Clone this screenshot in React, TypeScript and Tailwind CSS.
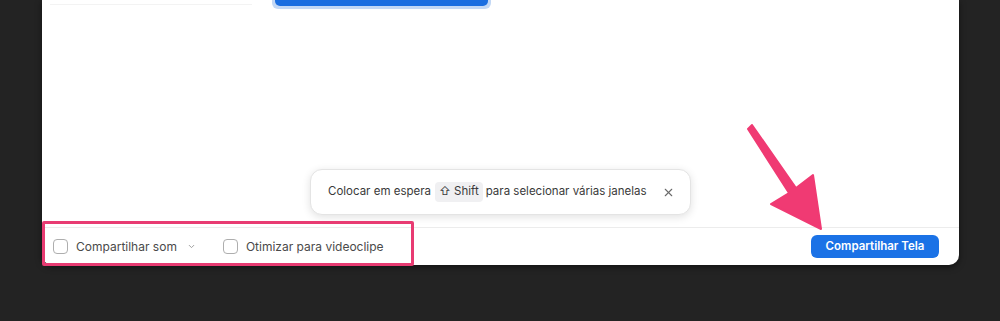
import { X, ChevronDown } from 'lucide-react';

function Checkbox() {
  return <span className="block w-[15px] h-[15px] rounded-[4px] border border-[#aeaeae] bg-white shrink-0" />;
}

export default function App() {
  return (
    <div
      className="relative w-[1000px] h-[321px] bg-[#232323] overflow-hidden"
      style={{ fontFamily: 'Inter, "Noto Sans", sans-serif' }}
    >
      {/* Share window */}
      <div className="relative ml-[42px] w-[917px] h-[265px] bg-white rounded-b-[10px] flex flex-col shadow-[0_2px_6px_rgba(0,0,0,0.5)]">
        {/* Top area, thumbnails cut off */}
        <div className="flex-1 flex items-start">
          <div className="ml-[8px] mt-[4px] w-[202px] h-[1px] bg-[#f3f3f3]" />
          <div className="ml-[20px] w-[219px] h-[9px] rounded-b-[6px] bg-[#c3d8f5] px-[3px] pb-[3px]">
            <div className="w-full h-full rounded-b-[5px] bg-[#1b6ee0]" />
          </div>
        </div>

        {/* Footer */}
        <div className="h-[38px] border-t border-[#ececec] flex items-center pl-[11px] pr-[20px] whitespace-nowrap">
          <Checkbox />
          <span className="ml-[8px] text-[12px] text-[#4a4a4a]">Compartilhar som</span>
          <ChevronDown className="ml-[10px] w-[9px] h-[9px] text-[#9a9a9a]" strokeWidth={2.5} />
          <div className="ml-[27px] flex">
            <Checkbox />
          </div>
          <span className="ml-[8px] text-[12px] text-[#4a4a4a]">Otimizar para videoclipe</span>
          <button className="ml-auto w-[128px] h-[23px] rounded-[6px] bg-[#1b72e6] text-white text-[11.5px] font-semibold">
            Compartilhar Tela
          </button>
        </div>

        {/* Hint toast */}
        <div className="absolute left-[268px] top-[169px] w-[381px] h-[46px] bg-white rounded-[12px] border border-[#e4e4e4] shadow-[0_2px_8px_rgba(0,0,0,0.12)] flex items-center pl-[17px] pr-[15px] text-[11.5px] text-[#3a3a3a] whitespace-nowrap">
          <span>Colocar em espera</span>
          <span className="ml-[4px] px-[4px] py-[1px] rounded-[4px] bg-[#f0f0f2] text-[#3a3a3a]">⇧ Shift</span>
          <span className="ml-[3px]">para selecionar várias janelas</span>
          <X className="ml-auto w-[13px] h-[13px] text-[#6a6a6a] shrink-0" strokeWidth={2} />
        </div>
      </div>

      {/* Annotation: highlight box */}
      <div className="absolute left-[42px] top-[221px] w-[372px] h-[45px] border-[3px] border-[#e83b72] rounded-[2px]" />

      {/* Annotation: arrow */}
      <svg className="absolute left-0 top-0" width="1000" height="321" viewBox="0 0 1000 321">
        <path
          d="M748 129 L752 125 L796 188 L813 175 L821 229 L771 204 L789 193 Z"
          fill="#f03a73"
          stroke="#f03a73"
          strokeWidth="2"
          strokeLinejoin="round"
        />
      </svg>
    </div>
  );
}
